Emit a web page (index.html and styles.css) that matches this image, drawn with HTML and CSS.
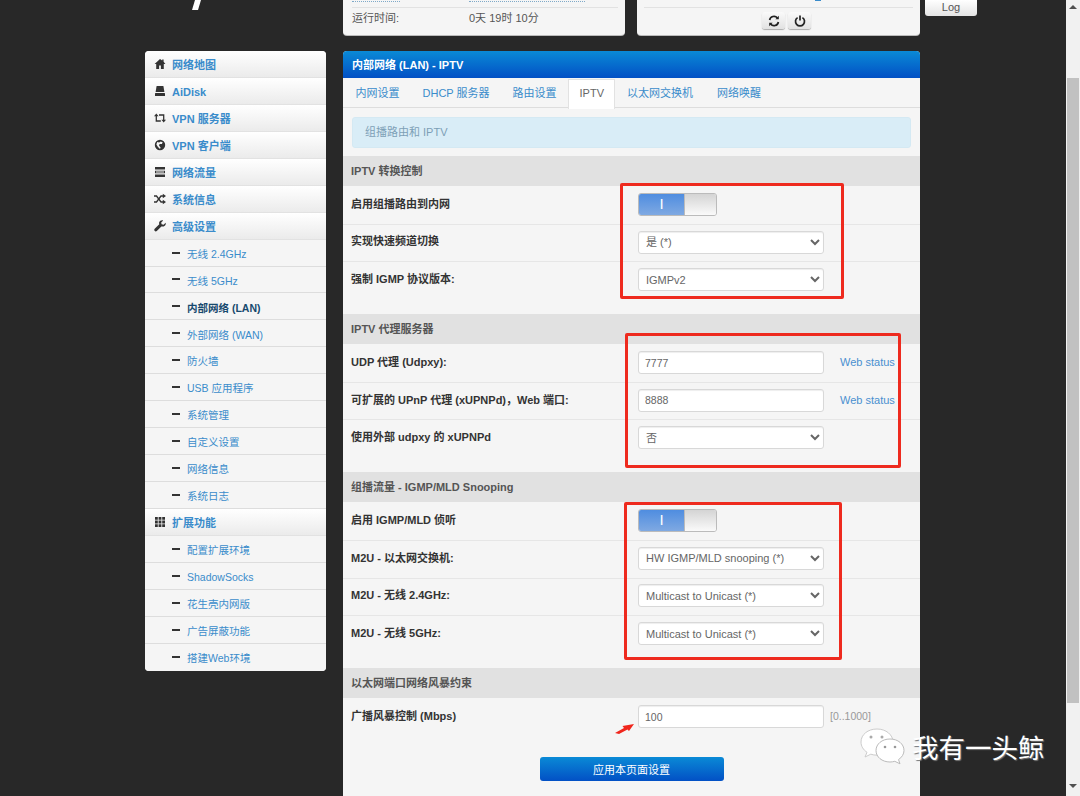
FILE: index.html
```html
<!DOCTYPE html>
<html lang="zh-CN">
<head>
<meta charset="utf-8">
<title>内部网络 (LAN) - IPTV</title>
<link rel="stylesheet" href="styles.css">
</head>
<body>
<div class="viewport">
  <div class="page">
    <div class="top">
      <div class="logo-col"><svg class="logo-bit" width="12" height="11" viewBox="0 0 12 11"><path d="M5 0h6L8 10H2z" fill="#fff"/></svg></div>
      <div class="card status">
        <div class="status-links"><span class="dots d1"></span><span class="dots d2"></span></div>
        <div class="status-row"><span class="status-k">运行时间:</span><span>0天 19时 10分</span></div>
      </div>
      <div class="card actions">
        <div class="actions-top"><span class="mini-link"></span></div>
        <div class="actions-btns">
          <span class="icon-btn"><svg width="12" height="12" viewBox="0 0 12 12" fill="none" stroke="#222" stroke-width="1.7"><path d="M1.6 5A4.4 4.4 0 0 1 9.4 3"/><path d="M10.4 7A4.4 4.4 0 0 1 2.6 9"/><path d="M10.8 .8v3.4H7.4z" fill="#222" stroke="none"/><path d="M1.2 11.2V7.8h3.4z" fill="#222" stroke="none"/></svg></span>
          <span class="icon-btn"><svg width="12" height="12" viewBox="0 0 12 12" fill="none" stroke="#222" stroke-width="1.7"><path d="M3.6 2.6a4.5 4.5 0 1 0 4.8 0"/><path d="M6 .6v5"/></svg></span>
        </div>
      </div>
      <div class="log-btn">Log</div>
    </div>
    <div class="content">
      <nav class="sidebar">
        <a class="nav-top"><svg class="ico" viewBox="0 0 12 12"><path d="M6 1 .6 6h1.600v5h2.900V7.600h1.800V11h2.900V6h1.600L9.600 3.800V1.600H8.200v.9z"/></svg>网络地图</a>
        <a class="nav-top"><svg class="ico" viewBox="0 0 12 12"><path d="M2.600 1h6.800l1 6H1.600z"/><rect x="1" y="8" width="10" height="3" rx=".6"/></svg>AiDisk</a>
        <a class="nav-top"><svg class="ico ico-line" viewBox="0 0 12 12"><path d="M2.300 4v5h4.500"/><path d="M5 3h4.700v5"/><path class="ico-head" d="M0 4.200 2.300 1.400 4.600 4.200zM7.400 7.800 9.700 10.600 12 7.800z"/></svg>VPN 服务器</a>
        <a class="nav-top"><svg class="ico" viewBox="0 0 12 12"><path fill-rule="evenodd" d="M6 .8a5.200 5.200 0 1 0 0 10.400A5.200 5.200 0 0 0 6 .8zM3.200 3l2 .6 1.600-1.200 2 1-1 1.600H5.600L5 6.600l1.600 2-.6 1.400L4 8 2.400 5.400z"/></svg>VPN 客户端</a>
        <a class="nav-top"><svg class="ico" viewBox="0 0 12 12"><path fill-rule="evenodd" d="M1 1h10v2.600H1zM1 4.700h10v2.600H1zM1 8.400h10V11H1zM2 5.500v1h8v-1z"/></svg>网络流量</a>
        <a class="nav-top"><svg class="ico ico-line" viewBox="0 0 12 12"><path d="M0 3h2.500l4.500 6h2"/><path d="M0 9h2.500l4.500-6h2"/><path class="ico-head" d="M8.800 .8 12 3 8.800 5.200zM8.800 6.800 12 9l-3.200 2.200z"/></svg>系统信息</a>
        <a class="nav-top"><svg class="ico" viewBox="0 0 12 12"><path d="M11.600 2.800 9.600 4.700 7.600 4.300 7.200 2.400 9.200.4C7.600-.2 5.700.6 5.200 2.200c-.2.800-.2 1.400.1 2L.7 8.800c-.6.600-.6 1.500 0 2.200.6.600 1.500.6 2.100 0l4.600-4.600c2.200.8 5-1 4.200-3.600z"/></svg>高级设置</a>
        <a class="nav-sub"><i class="dash"></i>无线 2.4GHz</a>
        <a class="nav-sub"><i class="dash"></i>无线 5GHz</a>
        <a class="nav-sub current"><i class="dash"></i>内部网络 (LAN)</a>
        <a class="nav-sub"><i class="dash"></i>外部网络 (WAN)</a>
        <a class="nav-sub"><i class="dash"></i>防火墙</a>
        <a class="nav-sub"><i class="dash"></i>USB 应用程序</a>
        <a class="nav-sub"><i class="dash"></i>系统管理</a>
        <a class="nav-sub"><i class="dash"></i>自定义设置</a>
        <a class="nav-sub"><i class="dash"></i>网络信息</a>
        <a class="nav-sub"><i class="dash"></i>系统日志</a>
        <a class="nav-top"><svg class="ico" viewBox="0 0 12 12"><path d="M1 1h2.800v2.800H1zM4.600 1h2.800v2.800H4.600zM8.200 1H11v2.800H8.200zM1 4.600h2.800v2.800H1zM4.600 4.600h2.800v2.800H4.600zM8.200 4.600H11v2.800H8.200zM1 8.200h2.800V11H1zM4.600 8.200h2.800V11H4.600zM8.200 8.200H11V11H8.200z"/></svg>扩展功能</a>
        <a class="nav-sub"><i class="dash"></i>配置扩展环境</a>
        <a class="nav-sub"><i class="dash"></i>ShadowSocks</a>
        <a class="nav-sub"><i class="dash"></i>花生壳内网版</a>
        <a class="nav-sub"><i class="dash"></i>广告屏蔽功能</a>
        <a class="nav-sub"><i class="dash"></i>搭建Web环境</a>
      </nav>
      <main class="panel">
        <h1 class="panel-head">内部网络 (LAN) - IPTV</h1>
        <div class="tabs">
          <a class="tab">内网设置</a>
          <a class="tab">DHCP 服务器</a>
          <a class="tab">路由设置</a>
          <a class="tab active">IPTV</a>
          <a class="tab">以太网交换机</a>
          <a class="tab">网络唤醒</a>
        </div>
        <div class="alert">组播路由和 IPTV</div>

        <section class="group">
          <h2 class="group-head">IPTV 转换控制</h2>
          <div class="row"><label class="row-label">启用组播路由到内网</label><div class="row-ctl"><div class="toggle"><span class="toggle-on">I</span><span class="toggle-off"></span></div></div></div>
          <div class="row"><label class="row-label">实现快速频道切换</label><div class="row-ctl"><select class="field"><option>是 (*)</option></select></div></div>
          <div class="row"><label class="row-label">强制 IGMP 协议版本:</label><div class="row-ctl"><select class="field"><option>IGMPv2</option></select></div></div>
        </section>

        <section class="group">
          <h2 class="group-head">IPTV 代理服务器</h2>
          <div class="row"><label class="row-label">UDP 代理 (Udpxy):</label><div class="row-ctl"><input class="field" value="7777"><a class="side-link">Web status</a></div></div>
          <div class="row"><label class="row-label">可扩展的 UPnP 代理 (xUPNPd)，Web 端口:</label><div class="row-ctl"><input class="field" value="8888"><a class="side-link">Web status</a></div></div>
          <div class="row"><label class="row-label">使用外部 udpxy 的 xUPNPd</label><div class="row-ctl"><select class="field"><option>否</option></select></div></div>
        </section>

        <section class="group">
          <h2 class="group-head">组播流量 - IGMP/MLD Snooping</h2>
          <div class="row"><label class="row-label">启用 IGMP/MLD 侦听</label><div class="row-ctl"><div class="toggle"><span class="toggle-on">I</span><span class="toggle-off"></span></div></div></div>
          <div class="row"><label class="row-label">M2U - 以太网交换机:</label><div class="row-ctl"><select class="field"><option>HW IGMP/MLD snooping (*)</option></select></div></div>
          <div class="row"><label class="row-label">M2U - 无线 2.4GHz:</label><div class="row-ctl"><select class="field"><option>Multicast to Unicast (*)</option></select></div></div>
          <div class="row"><label class="row-label">M2U - 无线 5GHz:</label><div class="row-ctl"><select class="field"><option>Multicast to Unicast (*)</option></select></div></div>
        </section>

        <section class="group">
          <h2 class="group-head">以太网端口网络风暴约束</h2>
          <div class="row"><label class="row-label">广播风暴控制 (Mbps)</label><div class="row-ctl"><input class="field" value="100"><span class="range">[0..1000]</span></div></div>
        </section>

        <div class="apply-wrap"><button class="apply">应用本页面设置</button></div>
      </main>
    </div>
  </div>
  <div class="scrollbar">
    <span class="sb-up"></span>
    <span class="sb-thumb"></span>
    <span class="sb-down"></span>
  </div>
</div>

<div class="mark mark-a"></div>
<div class="mark mark-b"></div>
<div class="mark mark-c"></div>
<svg class="arrow" width="22" height="12" viewBox="0 0 22 12"><path d="M0 10 9 5 7.500 3 19 1 14 8 12.500 6.500 4 11z" fill="#f0261c"/></svg>
<div class="watermark">
  <svg width="46" height="38" viewBox="0 0 46 38">
    <path d="M17 1C8 1 1 6.500 1 14c0 4.300 2.400 7.900 6 10.300L5 29l5.800-2.800c2 .6 4 1 6.200 1 9 0 16-6 16-13.200S26 1 17 1z" fill="#fff" stroke="#ccc"/>
    <path d="M30 11c-8 0-14 5-14 11.500S22 34 30 34c1.700 0 3.300-.3 4.800-.7l5.200 2.500-1.500-4.200c3.400-2.200 5.500-5.600 5.500-9.100C44 16 38 11 30 11z" fill="#fff" stroke="#bbb"/>
    <circle cx="11" cy="9" r="1.500" fill="#aaa"/><circle cx="22" cy="9" r="1.500" fill="#aaa"/>
    <circle cx="25" cy="19" r="1.300" fill="#999"/><circle cx="35" cy="19" r="1.300" fill="#999"/>
  </svg>
  <span class="mark-text">我有一头鲸</span>
</div>
</body>
</html>
```

FILE: styles.css
```css
* { box-sizing: border-box; }
html, body { margin: 0; padding: 0; height: 796px; overflow: hidden; }
body {
  background: #282828;
  color: #555;
  font: 11px/1.2 "Liberation Sans", "Noto Sans CJK SC", sans-serif;
  position: relative;
}
a { text-decoration: none; color: #3a8ccb; }

.viewport { display: flex; height: 796px; }
.page { flex: 1; min-width: 0; padding-left: 145px; }

/* top strip (page is scrolled, so it is clipped) */
.top { display: flex; height: 35px; align-items: flex-start; }
.logo-col { width: 198px; height: 35px; padding-left: 45px; }
.logo-bit { display: block; }
.card { background: #f5f5f5; height: 35px; border-radius: 0 0 4px 4px; box-shadow: 0 1px 0 #bbb; }
.status { width: 282px; padding: 0 7px 0 9px; }
.status-links { height: 8px; border-bottom: 1px solid #e2e2e2; padding-top: 1px; display: flex; }
.dots { display: block; height: 1px; border-top: 1px dotted #7fa9c8; }
.d1 { width: 48px; }
.d2 { width: 116px; margin-left: 69px; }
.status-row { display: flex; padding-top: 3px; color: #555; line-height: 14px; }
.status-k { width: 117px; }
.actions { width: 283px; margin-left: 12px; padding: 0 7px; }
.actions-top { height: 8px; border-bottom: 1px solid #e2e2e2; position: relative; }
.mini-link { display: block; width: 6px; height: 1px; margin-left: 171px; background: #3a8ccb; }
.actions-btns { display: flex; justify-content: center; gap: 3px; padding: 4px 0 0 16px; }
.icon-btn {
  width: 23px; height: 17px; display: flex; align-items: center; justify-content: center;
  background: linear-gradient(#fafafa, #e2e2e2); border-radius: 3px; box-shadow: 0 1px 1px #aaa;
}
.log-btn {
  width: 52px; height: 16px; margin-left: 5px; text-align: center; line-height: 15px; color: #555;
  background: linear-gradient(#fff, #e4e4e4); border-radius: 0 0 3px 3px;
}

.content { display: flex; gap: 17px; padding-top: 16px; align-items: flex-start; }

/* sidebar */
.sidebar { width: 181px; background: #f5f5f5; border-radius: 4px; overflow: hidden; display: flex; flex-direction: column; }
.nav-top {
  height: 26.950px; display: flex; align-items: center; padding: 4px 0 0 9px; font-weight: bold; color: #3a8ccb;
  background: linear-gradient(#fff, #ebebeb); border-bottom: 1px solid #e2e2e2;
}
.ico { width: 12px; height: 12px; margin: 0 6px 4px 0; fill: #333; flex: none; }
.ico-line { fill: none; stroke: #333; stroke-width: 1.300; }
.ico-head { fill: #333; stroke: none; }
.nav-sub {
  height: 26.950px; display: flex; align-items: center; padding: 3px 0 0 27px; color: #3a8ccb;
  font-size: 10.500px; border-bottom: 1px solid #ddd; background: #f5f5f5;
}
.nav-sub:last-child { border-bottom: 0; }
.nav-sub.current { color: #17496e; font-weight: bold; }
.dash { width: 8px; height: 2px; background: #333; margin: 0 7px 3px 0; flex: none; }

/* main panel */
.panel { width: 577px; height: 760px; background: #f5f5f5; border-radius: 4px 4px 0 0; overflow: hidden; }
.panel-head {
  margin: 0; height: 27px; line-height: 28px; padding-left: 9px; font-size: 11px; font-weight: bold; color: #fff;
  background: linear-gradient(#0a8ad6, #0250c5);
}
.tabs { display: flex; height: 30px; border-bottom: 1px solid #ddd; padding: 1px 0 0 1px; }
.tab { padding: 0 11.500px; line-height: 29px; color: #3a8ccb; height: 29px; }
.tab:last-child { margin-left: 1px; }
.tab.active { background: #fff; color: #666; border: 1px solid #e2e2e2; border-bottom: 0; padding: 0 10.500px; height: 30px; line-height: 27px; }
.alert {
  margin: 9px 9px 8px; height: 31px; line-height: 29px; padding-left: 12px; color: #7d9fb6;
  background: #d9edf7; border: 1px solid #d4e9f3; border-radius: 3px;
}
.group { margin-bottom: 15px; }
.group-head {
  margin: 0; height: 30px; line-height: 30px; padding-left: 8px; font-size: 11px; font-weight: bold; color: #555;
  background: #e1e1e1;
}
.row { height: 37.700px; display: flex; align-items: center; border-top: 1px solid #e6e6e6; padding: 0 0 2px 8px; }
.group-head + .row { border-top: 0; padding-bottom: 0; }
.row-label { width: 287px; font-weight: bold; color: #333; flex: none; white-space: nowrap; }
.row-ctl { display: flex; align-items: center; }
.field {
  width: 186px; height: 23px; padding: 0 3px; border: 1px solid #d8d8d8; border-radius: 3px; background: #fff; color: #666;
  font: 11px "Liberation Sans", "Noto Sans CJK SC", sans-serif; box-shadow: inset 0 1px 1px #eee; outline: 0;
}
input.field { padding: 0 6px; font-size: 10.500px; }
.side-link { margin-left: 16px; color: #4a90d0; white-space: nowrap; }
.range { margin-left: 6px; color: #999; font-size: 10.500px; }
.toggle { width: 79px; height: 23px; display: flex; border: 1px solid #bbb; border-radius: 3px; overflow: hidden; }
.toggle-on {
  width: 45px; color: #fff; text-align: center; line-height: 20px; font-size: 15px;
  background: linear-gradient(#4f8de0, #7fa9e2);
}
.toggle-off { flex: 1; background: linear-gradient(#d4d4d4, #fafafa); border-left: 1px solid #bbb; }
.apply-wrap { display: flex; justify-content: center; padding-top: 7px; margin-top: -1px; }
.apply {
  width: 184px; height: 24px; border: 0; border-radius: 3px; color: #fff; cursor: default;
  font: 11px "Liberation Sans", "Noto Sans CJK SC", sans-serif;
  background: linear-gradient(#0a8ad6, #0250c5);
}

/* browser scrollbar */
.scrollbar { width: 14px; flex: none; background: #f1f1f1; display: flex; flex-direction: column; align-items: center; position: relative; }
.sb-up { width: 0; height: 0; margin-top: 5px; border: 4px solid transparent; border-top: 0; border-bottom: 4px solid #505050; }
.sb-thumb { width: 12px; height: 625px; margin-top: 69px; background: #c1c1c1; }
.sb-down { width: 0; height: 0; margin-top: 81px; border: 4px solid transparent; border-bottom: 0; border-top: 4px solid #505050; }

/* annotations drawn over the screenshot */
.mark { position: absolute; border: 3px solid #ee2a1e; border-radius: 2px; }
.mark-a { left: 620px; top: 183px; width: 224px; height: 116px; }
.mark-b { left: 625px; top: 333px; width: 276px; height: 135px; }
.mark-c { left: 624px; top: 502px; width: 218px; height: 158px; }
.arrow { position: absolute; left: 615px; top: 723px; }
.watermark { position: absolute; left: 860px; top: 727px; display: flex; align-items: center; gap: 6px; }
.mark-text { font: 26.500px/40px "Noto Sans CJK SC", sans-serif; color: #fff; text-shadow: 1px 1px 1px #777; white-space: nowrap; }
```
